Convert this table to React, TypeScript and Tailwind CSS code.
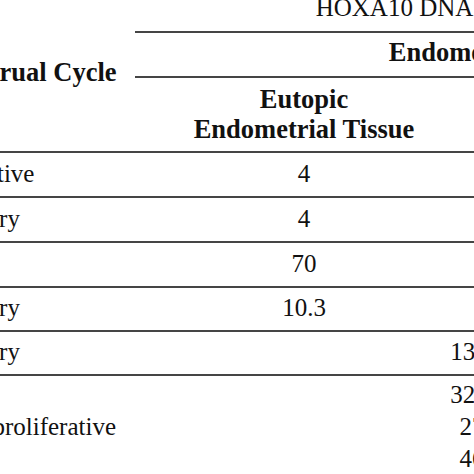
import React from 'react'

type Row = {
  phase: string
  eutopic: string
  ectopic: string[]
  pad: string
}

const rows: Row[] = [
  { phase: 'Proliferative', eutopic: '4', ectopic: [], pad: 'pt-[5px] pb-[6px]' },
  { phase: 'Secretory', eutopic: '4', ectopic: [], pad: 'pt-[5px] pb-[6px]' },
  { phase: 'Total', eutopic: '70', ectopic: [], pad: 'pt-[5px] pb-[6px]' },
  { phase: 'Secretory', eutopic: '10.3', ectopic: [], pad: 'pt-[4px] pb-[6px]' },
  { phase: 'Secretory', eutopic: '', ectopic: ['13.8'], pad: 'pt-[4px] pb-[6px]' },
  { phase: 'Menstrual/early proliferative', eutopic: '', ectopic: ['32.4', '27', '46'], pad: 'pt-[3px] pb-[3px]' },
]

const App = () => {
  return (
    <div className="w-[474px] h-[474px] overflow-hidden bg-white text-[#111111] font-['Liberation_Serif',serif]">
      <div className="ml-[-191px] mt-[-13px] w-[1013px] grid grid-cols-[326px_305px_64px_318px] text-[25px] leading-[32px]">
        {/* header */}
        <div className="row-span-3 flex items-center justify-center pt-[6px] border-b-2 border-[#454545] font-bold text-[26.5px] whitespace-nowrap">
          Phase of Menstrual Cycle
        </div>
        <div className="col-span-3 text-center pt-[5px] pb-[7px] border-b-2 border-[#454545] whitespace-nowrap">
          HOXA10 DNA methylation (%)
        </div>
        <div className="col-span-3 text-center pt-[3px] pb-[8px] pr-[16px] border-b-2 border-[#454545] font-bold text-[26.5px] whitespace-nowrap">
          Endometriosis
        </div>
        <div className="pl-[33px] pt-[6px] pb-[7px] text-center border-b-2 border-[#454545] font-bold text-[26.5px] leading-[30px] whitespace-nowrap">
          <div>Eutopic</div>
          <div>Endometrial Tissue</div>
        </div>
        <div className="border-b-2 border-[#454545]" />
        <div className="border-b-2 border-[#454545]" />

        {/* body */}
        {rows.map((r, i) => (
          <React.Fragment key={i}>
            <div className={`${r.pad} flex items-center justify-center border-b-2 border-[#454545] whitespace-nowrap`}>
              {r.phase}
            </div>
            <div className={`${r.pad} pl-[33px] text-center border-b-2 border-[#454545]`}>
              {r.eutopic}
            </div>
            <div className={`${r.pad} text-center border-b-2 border-[#454545]`}>
              {r.ectopic.map((v, j) => (
                <div key={j}>{v}</div>
              ))}
            </div>
            <div className={`${r.pad} border-b-2 border-[#454545]`} />
          </React.Fragment>
        ))}
      </div>
    </div>
  )
}

export default App
